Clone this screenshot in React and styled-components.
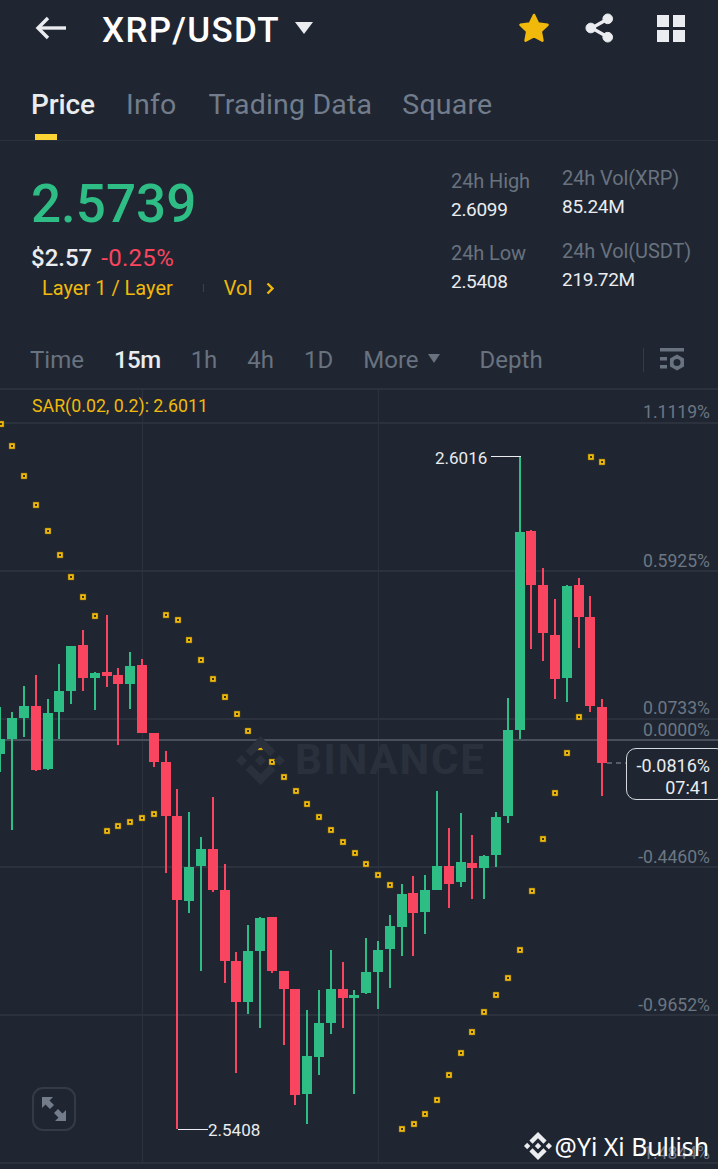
import React from 'react';
import styled, { createGlobalStyle } from 'styled-components';

const BG = '#1f2631';
const GREEN = '#2ebd85';
const RED = '#f9455f';
const YELLOW = '#f0b90b';
const GRID = '#2b323e';

// color, wick top, body top, body bottom, wick bottom
const candles = [
  ['g', 707, 739, 754, 772], ['g', 712, 718, 739, 830], ['g', 686, 706, 718, 737], ['r', 675, 706, 770, 771],
  ['g', 699, 713, 769, 770], ['g', 664, 691, 712, 739], ['g', 646, 646, 691, 704], ['r', 630, 645, 678, 691],
  ['g', 672, 673, 678, 710], ['r', 615, 672, 676, 687], ['r', 668, 675, 684, 745], ['g', 652, 666, 684, 709],
  ['r', 659, 665, 733, 733], ['r', 733, 733, 762, 767], ['r', 751, 762, 816, 873], ['r', 789, 816, 900, 1129],
  ['g', 812, 867, 901, 913], ['g', 837, 849, 866, 971], ['r', 797, 849, 890, 892], ['r', 864, 890, 961, 983],
  ['r', 952, 961, 1002, 1073], ['g', 925, 951, 1002, 1014], ['g', 917, 918, 951, 1028], ['r', 917, 917, 971, 973],
  ['r', 971, 971, 989, 1045], ['r', 989, 989, 1095, 1105], ['g', 1010, 1056, 1094, 1124], ['g', 990, 1023, 1057, 1075],
  ['g', 950, 989, 1023, 1034], ['r', 962, 989, 998, 1028], ['g', 990, 995, 998, 1094], ['g', 938, 972, 993, 994],
  ['g', 941, 950, 972, 1009], ['g', 915, 926, 949, 988], ['g', 884, 894, 927, 956], ['r', 876, 893, 913, 956],
  ['g', 875, 890, 912, 934], ['g', 791, 866, 890, 890], ['r', 828, 866, 884, 908], ['g', 813, 862, 882, 887],
  ['r', 835, 863, 868, 899], ['g', 855, 856, 868, 899], ['g', 812, 817, 855, 867], ['g', 698, 730, 816, 823],
  ['g', 457, 532, 730, 739], ['r', 530, 531, 585, 649], ['r', 568, 585, 633, 661], ['r', 599, 635, 679, 699],
  ['g', 585, 586, 678, 702], ['r', 578, 585, 617, 648], ['r', 596, 617, 706, 712], ['r', 699, 707, 763, 796],
];

const sar = [
  [1, 424], [12, 446], [24, 476], [36, 505], [48, 531], [60, 555], [71, 577], [83, 597], [95, 616],
  [107, 831], [118, 826], [130, 822], [142, 818], [154, 814],
  [166, 615], [178, 620], [189, 640], [201, 660], [213, 679], [225, 697], [237, 714], [248, 731], [260, 747],
  [272, 762], [284, 777], [296, 791], [307, 804], [319, 817], [331, 830], [343, 842], [355, 853], [366, 864],
  [378, 875], [390, 885],
  [402, 1129], [414, 1124], [425, 1114], [437, 1100], [449, 1075], [461, 1053], [472, 1032], [484, 1012],
  [496, 995], [508, 978], [520, 950], [532, 891], [543, 839], [555, 793], [567, 753], [579, 717], [591, 457], [602, 462],
];

const gridRows = [423, 571, 719, 867, 1015, 1163];
const gridCols = [142, 378];

const axisLabels = [
  ['1.1119%', 412], ['0.5925%', 561], ['0.0733%', 708], ['0.0000%', 730],
  ['-0.4460%', 857], ['-0.9652%', 1005], ['-1.4844%', 1153],
];

const GlobalStyle = createGlobalStyle`
  html, body { margin: 0; padding: 0; background: ${BG}; }
  body { font-family: Roboto, "Liberation Sans", sans-serif; }
`;

const Page = styled.div`
  width: 718px;
  height: 1169px;
  background: ${BG};
  overflow: hidden;
  display: flex;
  flex-direction: column;
`;

const Header = styled.header`
  height: 60px;
  display: flex;
  align-items: center;
  padding: 0 33px 0 35px;
`;

const BackButton = styled.svg`
  width: 31px;
  height: 24px;
  margin: 0 36px 4px 0;
`;

const Title = styled.h1`
  margin: 0;
  font-size: 35px;
  font-weight: 500;
  letter-spacing: 1.3px;
  color: #fff;
`;

const Caret = styled.span`
  display: inline-block;
  border-left: ${p => p.$size}px solid transparent;
  border-right: ${p => p.$size}px solid transparent;
  border-top: ${p => p.$size * 1.4}px solid ${p => p.$color};
  margin-left: ${p => p.$gap}px;
  margin-bottom: ${p => p.$lift || 0}px;
`;

const HeaderIcons = styled.div`
  margin-left: auto;
  margin-bottom: 4px;
  display: flex;
  align-items: center;
`;

const HeaderIcon = styled.svg`
  display: block;
  margin-right: ${p => p.$gap || 0}px;
`;

const Tabs = styled.nav`
  height: 81px;
  display: flex;
  gap: 30px;
  padding: 0 0 0 31px;
  border-bottom: 1px solid ${GRID};
  box-sizing: border-box;
`;

const Tab = styled.div`
  position: relative;
  font-size: ${p => (p.$active ? 28 : 28.5)}px;
  line-height: 32px;
  padding-top: 29px;
  margin-right: ${p => (p.$active ? 1 : 0)}px;
  letter-spacing: ${p => (p.$active ? -0.1 : 0.2)}px;
  font-weight: ${p => (p.$active ? 500 : 400)};
  color: ${p => (p.$active ? '#eaecef' : '#727c8b')};
  ${p => p.$active && `
    &::after {
      content: '';
      position: absolute;
      left: 4px;
      bottom: 0;
      width: 22px;
      height: 6px;
      background: #fcd535;
    }
  `}
`;

const TabSpacer = styled.span`
  margin-left: 2px;
`;

const Summary = styled.section`
  height: 189px;
  display: flex;
  justify-content: space-between;
  padding: 0 29px 0 31px;
  box-sizing: border-box;
`;

const PriceColumn = styled.div`
  display: flex;
  flex-direction: column;
`;

const LastPrice = styled.div`
  font-size: 53px;
  line-height: 62px;
  margin-top: 32px;
  font-weight: 500;
  color: ${GREEN};
`;

const ChangeRow = styled.div`
  display: flex;
  gap: 9px;
  margin-top: 8px;
  font-size: 24px;
  line-height: 30px;
`;

const Fiat = styled.span`
  color: #eaecef;
  font-weight: 500;
`;

const Change = styled.span`
  color: ${RED};
  letter-spacing: 0.3px;
`;

const TagRow = styled.div`
  display: flex;
  align-items: center;
  margin: 3px 0 0 11px;
  font-size: 20px;
  line-height: 24px;
  color: ${YELLOW};
`;

const TagDivider = styled.span`
  width: 1px;
  height: 8px;
  background: #3a424f;
  margin: 0 20px 0 30px;
`;

const Chevron = styled.svg`
  margin-left: 14px;
`;

const StatsGrid = styled.div`
  display: flex;
  margin-top: 26px;
`;

const StatColumn = styled.div`
  display: flex;
  flex-direction: column;
  gap: ${p => p.$gap}px;
  width: ${p => p.$width}px;
  margin-top: ${p => p.$offset}px;
`;

const Stat = styled.div`
  display: flex;
  flex-direction: column;
  gap: 3px;
`;

const StatLabel = styled.span`
  font-size: 20px;
  line-height: 26px;
  letter-spacing: -0.1px;
  white-space: nowrap;
  color: #69727f;
`;

const StatValue = styled.span`
  font-size: 19px;
  line-height: 26px;
  letter-spacing: -0.3px;
  color: #eaecef;
`;

const Toolbar = styled.div`
  height: 59px;
  display: flex;
  align-items: center;
  padding: 1px 33px 0 30px;
  box-sizing: border-box;
  border-bottom: 1px solid ${GRID};
`;

const Interval = styled.span`
  font-size: 24px;
  line-height: 30px;
  margin-left: ${p => p.$left}px;
  font-weight: ${p => (p.$active ? 500 : 400)};
  letter-spacing: ${p => (p.$active ? -0.5 : 0)}px;
  color: ${p => (p.$active ? '#eaecef' : '#69727f')};
  display: flex;
  align-items: center;
`;

const ToolbarDivider = styled.span`
  width: 1px;
  height: 24px;
  background: #353c48;
  margin-left: auto;
  margin-right: 16px;
`;

const ChartPanel = styled.div`
  position: relative;
  flex: 1;
  overflow: hidden;
`;

const ChartSvg = styled.svg`
  display: block;
  width: 718px;
  height: 780px;
`;

const ChartLabel = styled.span`
  position: absolute;
  top: ${p => p.$y - 389}px;
  transform: translateY(-50%);
  font-size: ${p => p.$size || 17.6}px;
  line-height: 20px;
  white-space: nowrap;
  color: ${p => p.$color};
  ${p => (p.$right !== undefined ? `right: ${p.$right}px;` : `left: ${p.$left}px;`)}
`;

const PriceTag = styled.div`
  position: absolute;
  left: 626px;
  top: 359px;
  width: 100px;
  height: 52px;
  box-sizing: border-box;
  padding: 6px 15px 0 0;
  border: 1px solid #d5d8dc;
  border-radius: 10px;
  background: ${BG};
  color: #eaecef;
  font-size: 18px;
  line-height: 22px;
  text-align: right;
`;

const ExpandButton = styled.div`
  position: absolute;
  left: 32px;
  top: 698px;
  width: 44px;
  height: 44px;
  box-sizing: border-box;
  border: 2px solid #343b47;
  border-radius: 11px;
  display: flex;
  align-items: center;
  justify-content: center;
`;

const Watermark = styled.div`
  position: absolute;
  left: 236px;
  top: 346px;
  display: flex;
  align-items: center;
  gap: 10px;
`;

const WatermarkText = styled.span`
  font-size: 42px;
  line-height: 50px;
  font-weight: 700;
  letter-spacing: 1.8px;
  color: #2a313c;
`;

const Credit = styled.div`
  position: absolute;
  right: 9px;
  top: 741px;
  display: flex;
  align-items: center;
  gap: 3px;
  color: #fff;
  font-size: 24.8px;
  line-height: 32px;
  font-family: "Noto Sans", Roboto, sans-serif;
`;

const BinanceLogo = ({ size, color }) => (
  <svg width={size} height={size} viewBox="0 0 126.61 126.61" fill={color}>
    <path d="m38.73 53.2 24.59-24.58 24.6 24.6 14.3-14.31L63.32 0 24.43 38.9z" />
    <path d="m0 63.31 14.3-14.31 14.31 14.31-14.31 14.3z" />
    <path d="m38.73 73.41 24.59 24.59 24.6-24.6 14.31 14.29-38.9 38.91-38.91-38.88v-.03z" />
    <path d="m98 63.31 14.3-14.31 14.31 14.3-14.31 14.32z" />
    <path d="m77.83 63.3-14.51-14.52-10.73 10.73-1.24 1.23-2.54 2.54 14.51 14.5 14.51-14.47z" />
  </svg>
);

const Candle = ({ index, data }) => {
  const [kind, top, bodyTop, bodyBottom, bottom] = data;
  const x = Math.round(0.4 + 11.8 * index);
  const fill = kind === 'g' ? GREEN : RED;
  return (
    <g fill={fill}>
      <rect x={x - 1} y={top} width="2" height={bottom - top} />
      <rect x={x - 5} y={bodyTop} width="10" height={bodyBottom - bodyTop} />
    </g>
  );
};

const Chart = () => (
  <ChartSvg viewBox="0 389 718 780">
    <rect x="0" y="389" width="718" height="1" fill={GRID} />
    {gridRows.map(y => <rect key={y} x="0" y={y - 1} width="718" height="2" fill={GRID} />)}
    {gridCols.map(x => <rect key={x} x={x} y="389" width="1" height="774" fill={GRID} />)}
    <rect x="0" y="739" width="718" height="2" fill="#4a505b" />
    {candles.map((c, i) => <Candle key={i} index={i} data={c} />)}
    {sar.map(([x, y]) => (
      <g key={`${x}-${y}`}>
        <rect x={x - 3} y={y - 3} width="6" height="6" fill={YELLOW} stroke="#6b5a1a" strokeWidth="0.5" />
        <rect x={x - 1} y={y - 1} width="2" height="2" fill="#3a3418" />
      </g>
    ))}
    <rect x="491" y="456" width="30" height="1" fill="#eaecef" />
    <rect x="178" y="1129" width="30" height="1" fill="#eaecef" />
    <path d="M607 763h20" stroke="#8f959e" strokeWidth="1" strokeDasharray="5 4" />
  </ChartSvg>
);

const intervals = [
  ['Time', 0], ['15m', 30, true], ['1h', 30], ['4h', 30], ['1D', 30],
];

export default function App() {
  return (
    <Page>
      <GlobalStyle />
      <Header>
        <BackButton viewBox="0 0 31 24" fill="none" stroke="#eaecef" strokeWidth="3.4">
          <path d="M31 12H3" />
          <path d="M13 2 3 12l10 10" />
        </BackButton>
        <Title>XRP/USDT</Title>
        <Caret $size={9} $color="#eaecef" $gap={15} $lift={4} />
        <HeaderIcons>
          <HeaderIcon $gap={35} width="32" height="30" viewBox="0 0 32 30">
            <path
              d="M16 2l4.100 8.500 9.400 1.300-6.800 6.500 1.700 9.300-8.400-4.500-8.400 4.500 1.700-9.300-6.800-6.500 9.400-1.300z"
              fill={YELLOW}
              stroke={YELLOW}
              strokeWidth="2.6"
              strokeLinejoin="round"
            />
          </HeaderIcon>
          <HeaderIcon $gap={43} width="29" height="30" viewBox="0 0 30 30" fill="#eaecef" stroke="#eaecef">
            <path d="M23 6 7 15l16 9" fill="none" strokeWidth="3.4" />
            <circle cx="23.500" cy="5.500" r="5" />
            <circle cx="6" cy="15" r="5" />
            <circle cx="23.500" cy="24.500" r="5" />
          </HeaderIcon>
          <HeaderIcon width="28" height="27" viewBox="0 0 28 27" fill="#eaecef">
            <rect x="0" y="0" width="12" height="12" />
            <rect x="16" y="0" width="12" height="12" />
            <rect x="0" y="15" width="12" height="12" />
            <rect x="16" y="15" width="12" height="12" />
          </HeaderIcon>
        </HeaderIcons>
      </Header>

      <Tabs>
        <Tab $active>Price</Tab>
        <Tab>Info</Tab>
        <Tab><TabSpacer>Trading Data</TabSpacer></Tab>
        <Tab>Square</Tab>
      </Tabs>

      <Summary>
        <PriceColumn>
          <LastPrice>2.5739</LastPrice>
          <ChangeRow>
            <Fiat>$2.57</Fiat>
            <Change>-0.25%</Change>
          </ChangeRow>
          <TagRow>
            Layer 1 / Layer
            <TagDivider />
            Vol
            <Chevron width="9" height="13" viewBox="0 0 9 13" fill="none" stroke={YELLOW} strokeWidth="2.4">
              <path d="m1.500 1.500 5 5-5 5" />
            </Chevron>
          </TagRow>
        </PriceColumn>
        <StatsGrid>
          <StatColumn $offset={1} $gap={17} $width={111}>
            <Stat>
              <StatLabel>24h High</StatLabel>
              <StatValue>2.6099</StatValue>
            </Stat>
            <Stat>
              <StatLabel>24h Low</StatLabel>
              <StatValue>2.5408</StatValue>
            </Stat>
          </StatColumn>
          <StatColumn $offset={-2} $gap={18} $width={127}>
            <Stat>
              <StatLabel>24h Vol(XRP)</StatLabel>
              <StatValue>85.24M</StatValue>
            </Stat>
            <Stat>
              <StatLabel>24h Vol(USDT)</StatLabel>
              <StatValue>219.72M</StatValue>
            </Stat>
          </StatColumn>
        </StatsGrid>
      </Summary>

      <Toolbar>
        {intervals.map(([label, left, active]) => (
          <Interval key={label} $left={left} $active={active}>{label}</Interval>
        ))}
        <Interval $left={30}>
          More
          <Caret $size={6.5} $color="#69727f" $gap={9} $lift={3} />
        </Interval>
        <Interval $left={40}>Depth</Interval>
        <ToolbarDivider />
        <svg width="25" height="24" viewBox="0 0 25 24" fill="#69727f">
          <rect x="0" y="0" width="24" height="3.5" />
          <rect x="0" y="9" width="7" height="3.5" />
          <rect x="0" y="17" width="7" height="3.5" />
          <path fillRule="evenodd" d="M17 6.500l7 4v8l-7 4-7-4v-8zM17 11a3.400 3.400 0 1 0 0 7 3.400 3.400 0 0 0 0-7z" />
        </svg>
      </Toolbar>

      <ChartPanel>
        <Chart />
        <Watermark>
          <BinanceLogo size={49} color="#2a313c" />
          <WatermarkText>BINANCE</WatermarkText>
        </Watermark>
        <ChartLabel $left={32} $y={406} $size={17.8} $color={YELLOW}>SAR(0.02, 0.2): 2.6011</ChartLabel>
        {axisLabels.map(([text, y]) => (
          <ChartLabel key={text} $right={8} $y={y} $color="#6d7683">{text}</ChartLabel>
        ))}
        <ChartLabel $left={435} $y={458} $size={17} $color="#eaecef">2.6016</ChartLabel>
        <ChartLabel $left={208} $y={1130} $size={17} $color="#eaecef">2.5408</ChartLabel>
        <PriceTag>-0.0816%<br />07:41</PriceTag>
        <ExpandButton>
          <svg width="24" height="24" viewBox="0 0 24 24" fill="#727c8b">
            <path d="M0 0h11L7.500 3.500 12 8l-4 4-4.500-4.500L0 11z" />
            <path d="M24 24H13l3.500-3.500L12 16l4-4 4.500 4.500L24 13z" />
          </svg>
        </ExpandButton>
        <Credit>
          <BinanceLogo size={28} color="#eaecef" />
          @Yi Xi Bullish
        </Credit>
      </ChartPanel>
    </Page>
  );
}
